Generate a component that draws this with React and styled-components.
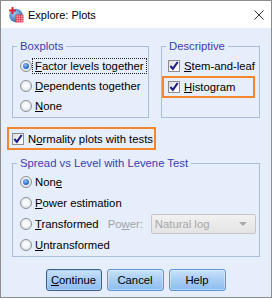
import React from 'react';
import styled, { createGlobalStyle } from 'styled-components';

const GlobalStyle = createGlobalStyle`
  body {
    margin: 0;
    background: #fff;
    font-family: "Liberation Sans", Arial, sans-serif;
  }
`;

const Window = styled.div`
  width: 272px;
  height: 298px;
  box-sizing: border-box;
  border: 1px solid #8c8c8c;
  display: flex;
  flex-direction: column;
  background: #e5eefa;
`;

const TitleBar = styled.div`
  height: 27px;
  flex: none;
  background: #fff;
  display: flex;
  align-items: center;
  padding: 0 7px 0 7px;
  font-size: 11px;
  color: #000;
`;

const Title = styled.span`
  margin-left: 4px;
  flex: 1;
  padding-top: 1px;
`;

const Body = styled.div`
  flex: 1;
  padding: 11px 6px 0;
  font-size: 11.3px;
  color: #000;
`;

const TopRow = styled.div`
  display: flex;
  gap: 12px;
  margin: 0 5px;
`;

const Group = styled.fieldset`
  margin: 0;
  padding: 0 0 1px;
  border: 1px solid #a9bfd9;
  min-width: 0;
  box-sizing: border-box;
  ${p => (p.$width ? `width: ${p.$width}px; flex: none;` : 'flex: 1;')}
`;

const Legend = styled.legend`
  margin-left: 4px;
  padding: 0 3px;
  color: #3c3cb2;
  line-height: 14px;
`;

const Options = styled.div`
  display: flex;
  flex-direction: column;
  padding: ${p => p.$top || 3}px 3px 0 ${p => p.$left || 7}px;
`;

const Row = styled.div`
  display: flex;
  align-items: center;
  height: ${p => p.$h || 20}px;
  box-sizing: border-box;
`;

const Marked = styled(Row)`
  border: 2px solid #f5862e;
  padding-left: ${p => p.$pad}px;
  margin-left: ${p => p.$ml || 0}px;
  margin-right: ${p => p.$mr || 0}px;
  width: ${p => (p.$w ? `${p.$w}px` : 'auto')};
`;

const Label = styled.span`
  border: 1px dotted ${p => (p.$focus ? '#222' : 'transparent')};
  padding: 0 2px;
  margin-left: ${p => p.$ml || 0}px;
  line-height: 14px;
  white-space: nowrap;
  color: ${p => (p.$off ? '#a3a3a3' : 'inherit')};
`;

const RadioDot = styled.span`
  width: 12px;
  height: 12px;
  flex: none;
  box-sizing: border-box;
  border-radius: 50%;
  border: 1px solid #8a9098;
  background: radial-gradient(circle at 50% 45%, #ffffff 0, #f1f3f5 45%, #cdd1d6 100%);
  display: flex;
  align-items: center;
  justify-content: center;

  &::after {
    content: '';
    width: 6px;
    height: 6px;
    border-radius: 50%;
    background: radial-gradient(circle at 40% 35%, #8cc2ff, #1f5fc6 70%, #173e86);
    display: ${p => (p.$checked ? 'block' : 'none')};
  }
`;

const CheckBox = styled.span`
  width: 12px;
  height: 12px;
  flex: none;
  box-sizing: border-box;
  border: 1px solid #8d8d8d;
  background: linear-gradient(135deg, #dcdcdc, #f7f7f7 60%, #ffffff);
  margin-right: 1px;
  display: flex;
  align-items: center;
  justify-content: center;
`;

const Spacer = styled.span`
  width: ${p => p.$w}px;
  flex: none;
`;

const Select = styled.div`
  margin-left: 5px;
  width: 108px;
  height: 20px;
  box-sizing: border-box;
  border: 1px solid #c6c6c6;
  border-radius: 2px;
  background: linear-gradient(#f1f1f1, #e4e4e4);
  color: #a6a6a6;
  display: flex;
  align-items: center;
  padding: 0 8px 0 3px;
  justify-content: space-between;
`;

const Arrow = styled.span`
  width: 0;
  height: 0;
  border-left: 4px solid transparent;
  border-right: 4px solid transparent;
  border-top: 4px solid #a9a9a9;
`;

const Buttons = styled.div`
  display: flex;
  justify-content: center;
  gap: 5px;
  margin-top: 12px;
  padding-right: 1px;
`;

const Button = styled.button`
  width: ${p => p.$w}px;
  height: 22px;
  padding: 0;
  font-family: "Liberation Sans", Arial, sans-serif;
  font-size: 11.3px;
  color: #000;
  border-radius: 3px;
  border: 1px solid ${p => (p.$default ? '#3f5f86' : '#5b95d6')};
  box-shadow: inset 0 0 0 1px ${p => (p.$default ? '#a9d0f5' : 'rgba(255,255,255,0.35)')};
  background: linear-gradient(#c9e2fb, #a7cdf4 50%, #8dbdf0);
`;

const Check = () => (
  <CheckBox>
    <svg width="10" height="10" viewBox="0 0 10 10">
      <path d="M1.4 5.0 L3.9 7.9 L8.7 1.0" fill="none" stroke="#1e1e88" strokeWidth="2.1" />
    </svg>
  </CheckBox>
);

const AppIcon = () => (
  <svg width="16" height="16" viewBox="0 0 16 16">
    <defs>
      <radialGradient id="globe" cx="40%" cy="35%" r="70%">
        <stop offset="0" stopColor="#9cc8f0" />
        <stop offset="1" stopColor="#2f6db3" />
      </radialGradient>
    </defs>
    <circle cx="8" cy="8.5" r="6.8" fill="url(#globe)" />
    <rect x="8" y="8" width="7" height="7" fill="#f4b6c0" stroke="#d22a3c" strokeWidth="0.8" />
    <path d="M10.3 8 V15 M12.6 8 V15 M8 10.3 H15 M8 12.6 H15" stroke="#d22a3c" strokeWidth="0.7" />
    <path d="M1 3.5 H8 M4.5 0 V7" stroke="#e02030" strokeWidth="2" />
  </svg>
);

const CloseIcon = () => (
  <svg width="10" height="10" viewBox="0 0 10 10">
    <path d="M0.5 0.5 L9.5 9.5 M9.5 0.5 L0.5 9.5" stroke="#333" strokeWidth="1" />
  </svg>
);

export default function App() {
  return (
    <>
      <GlobalStyle />
      <Window>
        <TitleBar>
          <AppIcon />
          <Title>Explore: Plots</Title>
          <CloseIcon />
        </TitleBar>
        <Body>
          <TopRow>
            <Group $width={137}>
              <Legend>Boxplots</Legend>
              <Options>
                <Row>
                  <RadioDot $checked />
                  <Label $focus><u>F</u>actor levels together</Label>
                </Row>
                <Row>
                  <RadioDot />
                  <Label><u>D</u>ependents together</Label>
                </Row>
                <Row>
                  <RadioDot />
                  <Label><u>N</u>one</Label>
                </Row>
              </Options>
            </Group>
            <Group>
              <Legend>Descriptive</Legend>
              <Options $left={6}>
                <Row>
                  <Check />
                  <Label><u>S</u>tem-and-leaf</Label>
                </Row>
                <Marked $h={22} $pad={4} $ml={-6} $mr={1}>
                  <Check />
                  <Label><u>H</u>istogram</Label>
                </Marked>
              </Options>
            </Group>
          </TopRow>
          <Marked $h={23} $pad={3} $w={149} style={{ marginTop: 9 }}>
            <Check />
            <Label>N<u>o</u>rmality plots with tests</Label>
          </Marked>
          <Group style={{ margin: '6px 5px 0' }}>
            <Legend>Spread vs Level with Levene Test</Legend>
            <Options $top={1}>
              <Row $h={21}>
                <RadioDot $checked />
                <Label>Non<u>e</u></Label>
              </Row>
              <Row $h={21}>
                <RadioDot />
                <Label><u>P</u>ower estimation</Label>
              </Row>
              <Row $h={21}>
                <RadioDot />
                <Label><u>T</u>ransformed</Label>
                <Spacer $w={3} />
                <Label $off>Po<u>w</u>er:</Label>
                <Select>
                  <span>Natural log</span>
                  <Arrow />
                </Select>
              </Row>
              <Row $h={21}>
                <RadioDot />
                <Label><u>U</u>ntransformed</Label>
              </Row>
            </Options>
          </Group>
          <Buttons>
            <Button $w={56} $default><u>C</u>ontinue</Button>
            <Button $w={57}>Cancel</Button>
            <Button $w={57}>Help</Button>
          </Buttons>
        </Body>
      </Window>
    </>
  );
}
